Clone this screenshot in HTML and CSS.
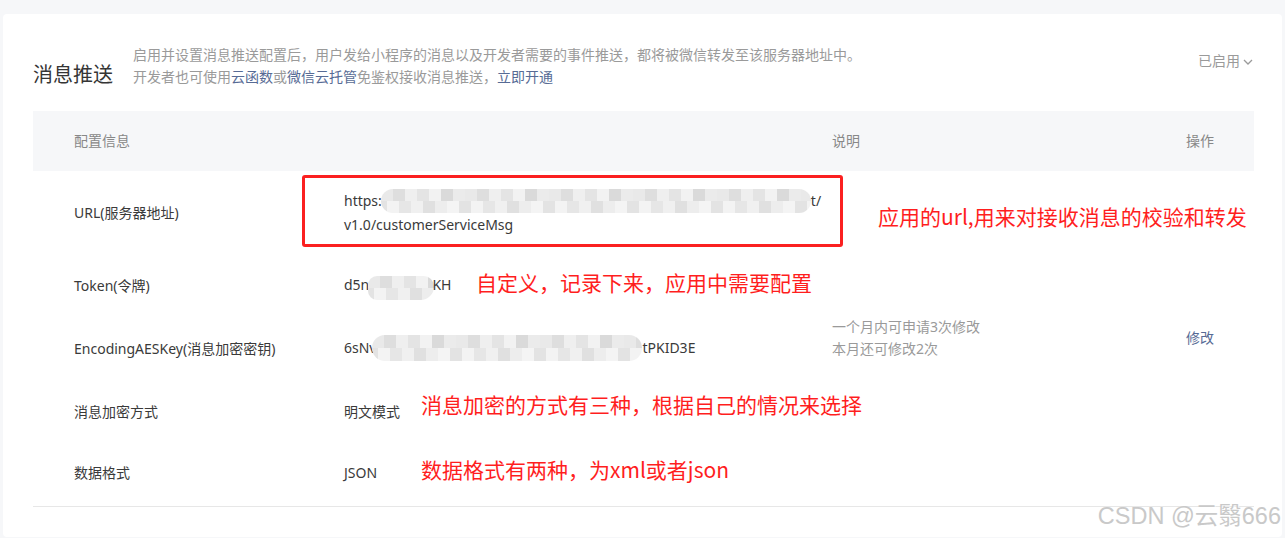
FILE: index.html
```html
<!DOCTYPE html>
<html lang="zh-CN">
<head>
<meta charset="utf-8">
<title>消息推送</title>
<link rel="stylesheet" href="styles.css">
</head>
<body>
<div class="card">
  <div class="head">
    <h2 class="title">消息推送</h2>
    <div class="desc">
      <p>启用并设置消息推送配置后，用户发给小程序的消息以及开发者需要的事件推送，都将被微信转发至该服务器地址中。</p>
      <p>开发者也可使用<a class="link">云函数</a>或<a class="link">微信云托管</a>免鉴权接收消息推送，<a class="link">立即开通</a></p>
    </div>
    <div class="status">已启用<svg class="chev" width="10" height="6" viewBox="0 0 10 6"><path d="M1 1 L5 5 L9 1" fill="none" stroke="#9a9a9a" stroke-width="1.3"/></svg></div>
  </div>

  <div class="table">
    <div class="row thead">
      <div class="cell">配置信息</div>
      <div class="cell"></div>
      <div class="cell">说明</div>
      <div class="cell">操作</div>
    </div>
    <div class="tbody">
      <div class="row r-url">
        <div class="cell">URL(服务器地址)</div>
        <div class="cell value two">https:<span class="blur b-url"></span>t/<br>v1.0/customerServiceMsg</div>
        <div class="cell"></div>
        <div class="cell"></div>
      </div>
      <div class="row r-std">
        <div class="cell">Token(令牌)</div>
        <div class="cell value">d5nv<span class="blur b-tok"></span>KH</div>
        <div class="cell"></div>
        <div class="cell"></div>
      </div>
      <div class="row r-aes">
        <div class="cell">EncodingAESKey(消息加密密钥)</div>
        <div class="cell value">6sNv<span class="blur b-aes"></span>tPKID3E</div>
        <div class="cell note">一个月内可申请3次修改<br>本月还可修改2次</div>
        <div class="cell op"><a class="link">修改</a></div>
      </div>
      <div class="row r-std">
        <div class="cell">消息加密方式</div>
        <div class="cell value">明文模式</div>
        <div class="cell"></div>
        <div class="cell"></div>
      </div>
      <div class="row r-std last">
        <div class="cell">数据格式</div>
        <div class="cell value">JSON</div>
        <div class="cell"></div>
        <div class="cell"></div>
      </div>

      <div class="redbox"></div>
      <div class="anno a1">应用的url,用来对接收消息的校验和转发</div>
      <div class="anno a2">自定义，记录下来，应用中需要配置</div>
      <div class="anno a3">消息加密的方式有三种，根据自己的情况来选择</div>
      <div class="anno a4">数据格式有两种，为xml或者json</div>
    </div>
  </div>
</div>
<div class="watermark">CSDN @云翳666</div>
</body>
</html>
```

FILE: styles.css
```css
* { box-sizing: border-box; }
html, body {
  margin: 0;
  padding: 0;
  background: #f6f7f9;
  font-family: "Noto Sans", "Noto Sans CJK SC", sans-serif;
  font-size: 14px;
  color: #3a3a3a;
}
body { position: relative; height: 538px; overflow: hidden; }

.card {
  margin: 14px 3px 0 3px;
  background: #fff;
  border-radius: 4px;
  padding: 30px 28px 30px 30px;
}

.head {
  display: flex;
  align-items: flex-end;
}
.title {
  margin: 0 20px 0 0;
  font-size: 20px;
  font-weight: 400;
  line-height: 26px;
  color: #353535;
  white-space: nowrap;
}
.desc p {
  margin: 0;
  line-height: 22px;
  color: #9a9a9a;
  white-space: nowrap;
}
.link { color: #576b95; text-decoration: none; }
.status {
  margin-left: auto;
  align-self: flex-start;
  margin-top: 6px;
  margin-right: 1px;
  line-height: 22px;
  color: #9a9a9a;
  display: flex;
  align-items: center;
  gap: 3px;
}
.chev { display: block; margin-top: 1px; }

.table { margin-top: 23px; }
.row {
  display: grid;
  grid-template-columns: 270px 488px 354px 1fr;
  padding-left: 41px;
  align-items: center;
}
.thead {
  height: 60px;
  background: #f6f7f9;
  color: #888;
}
.cell { line-height: 22px; white-space: nowrap; }

.tbody { position: relative; }
.r-url { height: 84px; }
.r-std { height: 62px; }
.r-aes { height: 64px; }
.last { height: 64px; padding-bottom: 3px; border-bottom: 1px solid #e7e7e7; }
.value.two { line-height: 24px; }

.note {
  align-self: start;
  margin-top: -1px;
  color: #9a9a9a;
}
.op { align-self: start; padding-top: 10px; }

.blur {
  display: inline-block;
  vertical-align: middle;
  border-radius: 13px;
  background-color: #ececec;
  background-image:
    linear-gradient(90deg, #e9e9e9 0 12px, #dedede 12px 24px, #efefef 24px 36px, #e4e4e4 36px 48px, #f2f2f2 48px 60px, #dadada 60px 72px, #ebebeb 72px 84px),
    linear-gradient(90deg, #f3f3f3 0 12px, #e6e6e6 12px 24px, #f0f0f0 24px 36px, #e0e0e0 36px 48px, #ededed 48px 60px, #f4f4f4 60px 72px, #e3e3e3 72px 84px);
  background-size: 84px 50%, 84px 50%;
  background-position: 0 0, 6px 100%;
  background-repeat: repeat-x;
}
.b-url { width: 430px; height: 24px; margin-top: -2px; margin-left: -1px; }
.b-tok { width: 66px; height: 24px; margin-left: -8px; margin-right: -2px; margin-top: 4px; border-radius: 12px 14px 18px 12px; }
.b-aes { width: 270px; height: 26px; margin-left: -4px; margin-top: -2px; }

.redbox {
  position: absolute;
  left: 269px;
  top: 4px;
  width: 541px;
  height: 72px;
  border: 3px solid #fb2020;
  border-radius: 3px;
}
.anno {
  position: absolute;
  font-family: "Noto Sans CJK SC", "Noto Sans", sans-serif;
  font-size: 21px;
  line-height: 28px;
  color: #ff1e1e;
  white-space: nowrap;
}
.a1 { left: 845px; top: 31px; }
.a2 { left: 443px; top: 97px; }
.a3 { left: 388px; top: 219px; }
.a4 { left: 388px; top: 284px; }

.watermark {
  position: absolute;
  right: 4px;
  bottom: 8px;
  font-family: "Liberation Sans", "Noto Sans CJK SC", sans-serif;
  font-size: 23.5px;
  line-height: 28px;
  color: #c9c9c9;
  text-shadow: 1px 1px 0 rgba(255,255,255,0.8);
  white-space: nowrap;
}
```
